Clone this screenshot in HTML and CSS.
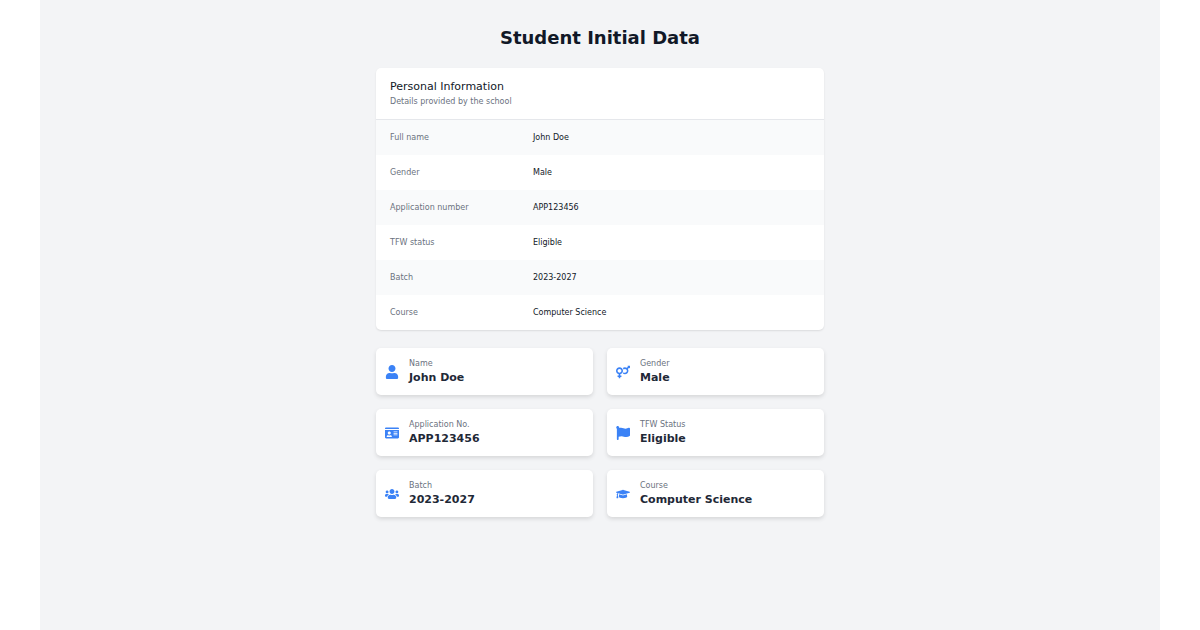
FILE: index.html
```html
<!DOCTYPE html>
<html lang="en">
<head>
<meta charset="utf-8">
<meta name="viewport" content="width=device-width, initial-scale=1">
<title>Student Initial Data</title>
<link rel="stylesheet" href="styles.css">
</head>
<body>
<main class="page">
  <div class="content">
    <h1 class="title">Student Initial Data</h1>

    <section class="panel">
      <header class="panel-header">
        <h2 class="panel-title">Personal Information</h2>
        <p class="panel-note">Details provided by the school</p>
      </header>
      <dl class="details">
        <div class="row"><dt>Full name</dt><dd>John Doe</dd></div>
        <div class="row"><dt>Gender</dt><dd>Male</dd></div>
        <div class="row"><dt>Application number</dt><dd>APP123456</dd></div>
        <div class="row"><dt>TFW status</dt><dd>Eligible</dd></div>
        <div class="row"><dt>Batch</dt><dd>2023-2027</dd></div>
        <div class="row"><dt>Course</dt><dd>Computer Science</dd></div>
      </dl>
    </section>

    <section class="cards">
      <article class="card">
        <svg class="icon" viewBox="0 0 448 512" aria-hidden="true"><path d="M224 256c70.7 0 128-57.3 128-128S294.7 0 224 0 96 57.3 96 128s57.3 128 128 128zm89.6 32h-16.7c-22.2 10.2-46.9 16-72.9 16s-50.6-5.8-72.9-16h-16.7C60.2 288 0 348.2 0 422.4V464c0 26.5 21.5 48 48 48h352c26.5 0 48-21.5 48-48v-41.6c0-74.2-60.2-134.4-134.4-134.4z"/></svg>
        <div><p class="label">Name</p><p class="value">John Doe</p></div>
      </article>
      <article class="card">
        <svg class="icon" viewBox="0 0 576 512" aria-hidden="true"><path d="M564 0h-79c-10.7 0-16 12.9-8.5 20.5l16.9 16.9-48.7 48.7C422.5 72.1 396.2 64 368 64c-33.7 0-64.6 11.6-89.2 30.9 14 16.7 25 36 32.1 57.1 14.5-14.8 34.7-24 57.1-24 44.1 0 80 35.9 80 80s-35.9 80-80 80c-22.3 0-42.6-9.2-57.1-24-7.1 21.1-18 40.4-32.1 57.1 24.5 19.4 55.5 30.9 89.2 30.9 79.5 0 144-64.5 144-144 0-28.2-8.1-54.5-22.1-76.7l48.7-48.7 16.9 16.9c2.4 2.4 5.4 3.5 8.4 3.5 6.2 0 12.1-4.8 12.1-12V12c0-6.6-5.4-12-12-12zM144 64C64.5 64 0 128.5 0 208c0 68.5 47.9 125.9 112 140.4V400H76c-6.6 0-12 5.4-12 12v40c0 6.6 5.4 12 12 12h36v36c0 6.6 5.4 12 12 12h40c6.6 0 12-5.4 12-12v-36h36c6.6 0 12-5.4 12-12v-40c0-6.6-5.4-12-12-12h-36v-51.6c64.1-14.6 112-71.9 112-140.4 0-79.5-64.5-144-144-144zm0 224c-44.1 0-80-35.9-80-80s35.9-80 80-80 80 35.9 80 80-35.9 80-80 80z"/></svg>
        <div><p class="label">Gender</p><p class="value">Male</p></div>
      </article>
      <article class="card">
        <svg class="icon" viewBox="0 0 576 512" aria-hidden="true"><path fill-rule="evenodd" d="M528 32H48C21.5 32 0 53.5 0 80v16h576V80c0-26.5-21.5-48-48-48zM0 432c0 26.5 21.5 48 48 48h480c26.5 0 48-21.5 48-48V128H0v304zm352-232c0-4.4 3.6-8 8-8h144c4.4 0 8 3.6 8 8v16c0 4.4-3.6 8-8 8H360c-4.4 0-8-3.6-8-8v-16zm0 64c0-4.4 3.6-8 8-8h144c4.4 0 8 3.6 8 8v16c0 4.4-3.6 8-8 8H360c-4.4 0-8-3.6-8-8v-16zm0 64c0-4.4 3.6-8 8-8h144c4.4 0 8 3.6 8 8v16c0 4.4-3.6 8-8 8H360c-4.4 0-8-3.6-8-8v-16zM176 192c35.3 0 64 28.7 64 64s-28.7 64-64 64-64-28.7-64-64 28.7-64 64-64zM67.1 396.2C75.5 370.5 99.6 352 128 352h8.2c12.3 5.1 25.7 8 39.8 8s27.6-2.9 39.8-8h8.2c28.4 0 52.5 18.5 60.9 44.2 3.2 9.9-5.2 19.8-15.6 19.8H82.7c-10.4 0-18.8-10-15.6-19.8z"/></svg>
        <div><p class="label">Application No.</p><p class="value">APP123456</p></div>
      </article>
      <article class="card">
        <svg class="icon" viewBox="0 0 512 512" aria-hidden="true"><path d="M349.565 98.783C295.978 98.783 251.721 64 184.348 64c-24.955 0-47.309 4.384-68.045 12.013a55.947 55.947 0 0 0 3.586-23.562C118.117 24.015 94.806 1.206 66.338.048 34.345-1.254 8 24.296 8 56c0 19.026 9.497 35.825 24 45.945V488c0 13.255 10.745 24 24 24h16c13.255 0 24-10.745 24-24v-94.4c28.311-12.064 63.582-22.122 114.435-22.122 53.588 0 97.844 34.783 165.217 34.783 48.169 0 86.667-16.294 122.505-40.858C506.84 359.452 512 349.571 512 339.045v-243.1c0-23.393-24.269-38.87-45.485-29.016-34.338 15.948-76.454 31.854-116.95 31.854z"/></svg>
        <div><p class="label">TFW Status</p><p class="value">Eligible</p></div>
      </article>
      <article class="card">
        <svg class="icon" viewBox="0 0 640 512" aria-hidden="true"><path d="M96 224c35.3 0 64-28.7 64-64s-28.7-64-64-64-64 28.7-64 64 28.7 64 64 64zm448 0c35.3 0 64-28.7 64-64s-28.7-64-64-64-64 28.7-64 64 28.7 64 64 64zm32 32h-64c-17.6 0-33.5 7.1-45.1 18.6 40.3 22.1 68.9 62 75.1 109.4h66c17.7 0 32-14.3 32-32v-32c0-35.3-28.7-64-64-64zm-256 0c61.9 0 112-50.1 112-112S381.9 32 320 32 208 82.1 208 144s50.1 112 112 112zm76.8 32h-8.3c-20.8 10-43.9 16-68.5 16s-47.6-6-68.5-16h-8.3C179.6 288 128 339.6 128 403.2V432c0 26.5 21.5 48 48 48h288c26.5 0 48-21.5 48-48v-28.8c0-63.6-51.6-115.2-115.2-115.2zm-223.7-13.4C161.5 263.1 145.6 256 128 256H64c-35.3 0-64 28.7-64 64v32c0 17.7 14.3 32 32 32h65.9c6.3-47.4 34.9-87.3 75.2-109.4z"/></svg>
        <div><p class="label">Batch</p><p class="value">2023-2027</p></div>
      </article>
      <article class="card">
        <svg class="icon" viewBox="0 0 640 512" aria-hidden="true"><path d="M622.34 153.2L343.4 67.5c-15.2-4.67-31.6-4.67-46.79 0L17.66 153.2c-23.54 7.23-23.54 38.36 0 45.59l48.63 14.94c-10.67 13.19-17.23 29.28-17.88 46.9C38.78 266.15 32 276.11 32 288c0 10.78 5.68 19.85 13.86 25.65L20.33 428.53C18.11 438.52 25.71 448 35.94 448h56.11c10.24 0 17.84-9.48 15.62-19.47L82.14 313.65C90.32 307.85 96 298.78 96 288c0-11.57-6.47-21.25-15.66-26.87.76-15.02 8.44-28.3 20.69-36.72L296.6 284.5c9.06 2.78 26.44 6.25 46.79 0l278.95-85.7c23.55-7.24 23.55-38.36 0-45.6zM352.79 315.09c-28.53 8.76-52.84 3.92-65.59 0l-145.02-44.55L128 384c0 35.35 85.96 64 192 64s192-28.65 192-64l-14.18-113.47-145.03 44.56z"/></svg>
        <div><p class="label">Course</p><p class="value">Computer Science</p></div>
      </article>
    </section>
  </div>
</main>
</body>
</html>
```
FILE: styles.css
```css
* { box-sizing: border-box; }

body, h1, h2, p, dl, dd { margin: 0; }

body {
  background: #fff;
  color: #111827;
  font-family: "DejaVu Sans", sans-serif;
  font-size: 8px;
  line-height: 12px;
}

.page {
  max-width: 1120px;
  min-height: 100vh;
  margin: 0 auto;
  padding: 28px 18px;
  background: #f3f4f6;
}

.content {
  max-width: 448px;
  margin: 0 auto;
}

.title {
  margin-bottom: 20px;
  font-size: 18px;
  font-weight: 700;
  line-height: 20px;
  text-align: center;
}

.panel {
  margin-bottom: 18px;
  overflow: hidden;
  background: #fff;
  border-radius: 5px;
  box-shadow: 0 1px 2px rgba(0, 0, 0, 0.1);
}

.panel-header { padding: 12px 14px 11px; }

.panel-title {
  font-size: 11px;
  font-weight: 400;
  line-height: 14px;
}

.panel-note {
  margin-top: 2px;
  color: #6b7280;
}

.details { border-top: 1px solid #e5e7eb; }

.row {
  display: grid;
  grid-template-columns: repeat(3, 1fr);
  gap: 9px;
  padding: 12px 14px 11px;
}

.row:nth-child(odd) { background: #f9fafb; }

.row dt { color: #6b7280; }

.row dd { grid-column: span 2; }

.cards {
  display: grid;
  grid-template-columns: 1fr 1fr;
  gap: 14px;
}

.card {
  display: flex;
  align-items: center;
  gap: 10px;
  padding: 9px;
  background: #fff;
  border-radius: 5px;
  box-shadow: 0 2px 4px rgba(0, 0, 0, 0.12);
}

.icon {
  flex: none;
  width: 14px;
  height: 14px;
  fill: #3b82f6;
}

.label {
  color: #6b7280;
  line-height: 13px;
}

.value {
  color: #1f2937;
  font-size: 11px;
  font-weight: 700;
  line-height: 16px;
}
```
